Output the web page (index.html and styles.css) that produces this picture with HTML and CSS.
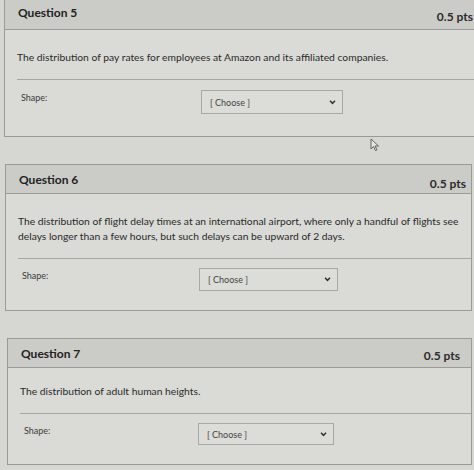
FILE: index.html
```html
<!DOCTYPE html>
<html>
<head>
<meta charset="utf-8">
<link rel="stylesheet" href="styles.css">
</head>
<body>
<div class="page">
  <section class="card card-q5">
    <header class="card-head">
      <span class="q-title">Question 5</span>
      <span class="q-pts">0.5 pts</span>
    </header>
    <div class="card-body">
      <p class="q-text">The distribution of pay rates for employees at Amazon and its affiliated companies.</p>
      <div class="answer-row">
        <span class="answer-label">Shape:</span>
        <div class="select"><span>[ Choose ]</span><svg class="chev" viewBox="0 0 8 6" width="7" height="5"><path d="M1 1 L4 4 L7 1" fill="none" stroke="#333" stroke-width="1.8"/></svg></div>
      </div>
    </div>
  </section>

  <section class="card card-q6">
    <header class="card-head">
      <span class="q-title">Question 6</span>
      <span class="q-pts">0.5 pts</span>
    </header>
    <div class="card-body">
      <p class="q-text">The distribution of flight delay times at an international airport, where only a handful of flights see delays longer than a few hours, but such delays can be upward of 2 days.</p>
      <div class="answer-row">
        <span class="answer-label">Shape:</span>
        <div class="select"><span>[ Choose ]</span><svg class="chev" viewBox="0 0 8 6" width="7" height="5"><path d="M1 1 L4 4 L7 1" fill="none" stroke="#333" stroke-width="1.8"/></svg></div>
      </div>
    </div>
  </section>

  <section class="card card-q7">
    <header class="card-head">
      <span class="q-title">Question 7</span>
      <span class="q-pts">0.5 pts</span>
    </header>
    <div class="card-body">
      <p class="q-text">The distribution of adult human heights.</p>
      <div class="answer-row">
        <span class="answer-label">Shape:</span>
        <div class="select"><span>[ Choose ]</span><svg class="chev" viewBox="0 0 8 6" width="7" height="5"><path d="M1 1 L4 4 L7 1" fill="none" stroke="#333" stroke-width="1.8"/></svg></div>
      </div>
    </div>
  </section>

  <svg class="cursor" viewBox="0 0 10 14" width="10" height="14"><path d="M1 1 L1 11 L3.5 8.5 L5.5 12.5 L7 11.8 L5 8 L8.5 8 Z" fill="#e6e6e2" stroke="#555" stroke-width="0.9" stroke-linejoin="round"/></svg>
</div>
</body>
</html>
```

FILE: styles.css
```css
html, body {
  margin: 0;
  padding: 0;
  background: #d6d6d2;
}
body {
  font-family: Lato, "Open Sans", sans-serif;
  color: #2b2b2b;
  width: 474px;
  height: 470px;
  overflow: hidden;
}
.page {
  position: relative;
  display: flex;
  flex-direction: column;
  gap: 27px;
}
.card {
  border: 1px solid #9a9a96;
  background: #dadad6;
  margin-right: 2px;
}
.card-q5 { margin-left: 4px; margin-top: -1px; margin-right: -20px; }
.card-q6 { margin-left: 5px; }
.card-q7 { margin-left: 7px; }
.card-head {
  height: 28px;
  background: #cbcbc7;
  border-bottom: 1px solid #9a9a96;
  display: flex;
  justify-content: space-between;
  align-items: center;
  padding: 0 5px 0 13px;
}
.card-q5 .card-head { padding-right: 20px; align-items: flex-start; padding-top: 5px; height: 24px; }
.card-q5 .q-pts { margin-top: 4px; }
.card-q6 .q-pts { margin-top: 8px; }
.card-q7 .q-pts { margin-top: 5px; margin-right: 6px; }
.q-title {
  font-size: 12px;
  font-weight: 700;
  color: #222;
}
.q-pts {
  font-size: 12px;
  font-weight: 700;
  color: #2b2b2b;
}
.card-body {
  padding: 20px 0 19px 12px;
}
.card-q5 .card-body { padding-bottom: 22px; }
.card-q7 .card-body { padding-top: 16px; }
.q-text {
  margin: 0;
  font-size: 10.3px;
  line-height: 15px;
  color: #2a2a2a;
  padding-bottom: 14px;
  border-bottom: 1px solid #a6a6a2;
}
.answer-row {
  display: flex;
  align-items: flex-start;
  padding-top: 8px;
}
.card-q5 .answer-row { padding-top: 9px; }
.answer-label {
  font-size: 9px;
  color: #3a3a3a;
  width: 180px;
  padding-left: 4px;
  padding-top: 3px;
}
.card-q6 .answer-label { width: 177px; }
.card-q7 .answer-label { width: 174px; }
.select {
  width: 142px;
  height: 24px;
  margin-top: 1px;
  border: 1px solid #a8a8a4;
  background: #dcdcd8;
  display: flex;
  align-items: center;
  justify-content: space-between;
  padding: 0 6px 0 8px;
  box-sizing: border-box;
  font-size: 9px;
  color: #444;
}
.card-q6 .select { width: 139px; height: 23px; }
.card-q7 .select { width: 136px; height: 22px; }
.cursor {
  position: absolute;
  left: 370px;
  top: 138px;
}
```
